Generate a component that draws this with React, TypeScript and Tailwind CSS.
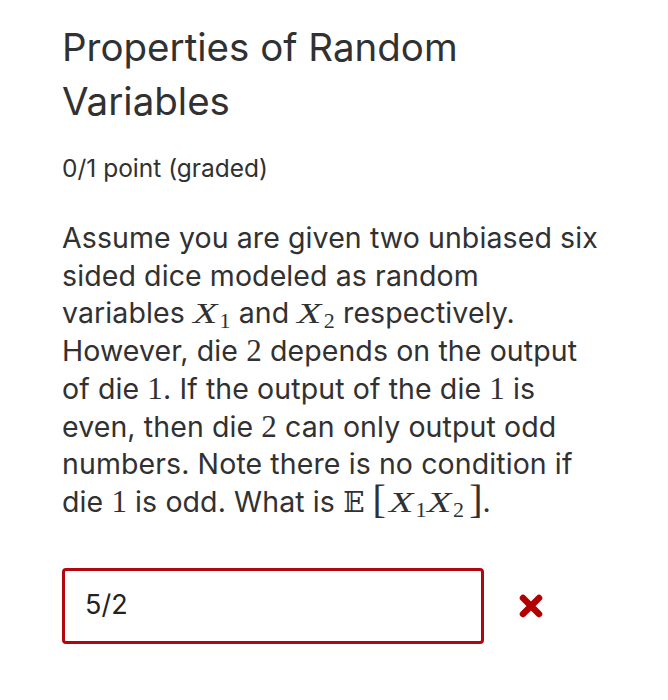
import React from "react";

const M = ({ children }: { children: React.ReactNode }) => (
  <span className="font-['Liberation_Serif','DejaVu_Serif',serif] text-[31px] leading-none">{children}</span>
);

const Sub = ({ n }: { n: string }) => (
  <span className="relative top-[5px] ml-[2px] text-[22px] leading-none not-italic">{n}</span>
);

// KaTeX's italic X is much wider than Liberation Serif's, so stretch it a bit
const X = () => (
  <i className="mr-[6px] inline-block origin-left scale-x-[1.33] text-[30px] leading-none">X</i>
);

const Var = ({ sub }: { sub: string }) => (
  <M>
    <X />
    <Sub n={sub} />
  </M>
);

export default function App() {
  return (
    <div className="min-h-[700px] bg-white px-[62px] pt-[20px] font-['Inter','Noto_Sans',sans-serif] text-[#313131]">
      <h1 className="text-[38.5px] font-normal leading-[54px]">
        Properties of Random
        <br />
        Variables
      </h1>
      <div className="mt-[25px] text-[24.5px] leading-[30px]">0/1 point (graded)</div>

      <p className="mt-[36px] w-[570px] text-[28.5px] leading-[37.7px] tracking-[0.1px]">
        Assume you are given two unbiased six
        <br />
        sided dice modeled as random
        <br />
        variables <Var sub="1" /> and <Var sub="2" /> respectively.
        <br />
        However, die <M>2</M> depends on the output
        <br />
        of die <M>1</M>. If the output of the die <M>1</M> is
        <br />
        even, then die <M>2</M> can only output odd
        <br />
        numbers. Note there is no condition if
        <br />
        die <M>1</M> is odd. What is{" "}
        <M>
          <span className="font-['DejaVu_Serif',serif] text-[28px]">𝔼</span>
          <span className="relative top-[1px] ml-[8px] mr-[3px] text-[40px] leading-[16px]">[</span>
          <X />
          <Sub n="1" />
          <X />
          <Sub n="2" />
          <span className="relative top-[1px] ml-[5px] text-[40px] leading-[16px]">]</span>
        </M>
        .
      </p>

      <div className="mt-[47px] flex items-center">
        <div className="flex h-[76px] w-[422px] items-center rounded-[4px] border-[3px] border-[#b20610] px-[20px] text-[27px] text-[#222]">
          5/2
        </div>
        <svg className="ml-[35px]" width="24" height="24" viewBox="0 0 24 24">
          <path d="M4 4 L20 20 M20 4 L4 20" stroke="#b20000" strokeWidth="6.5" strokeLinecap="round" />
        </svg>
      </div>
    </div>
  );
}
